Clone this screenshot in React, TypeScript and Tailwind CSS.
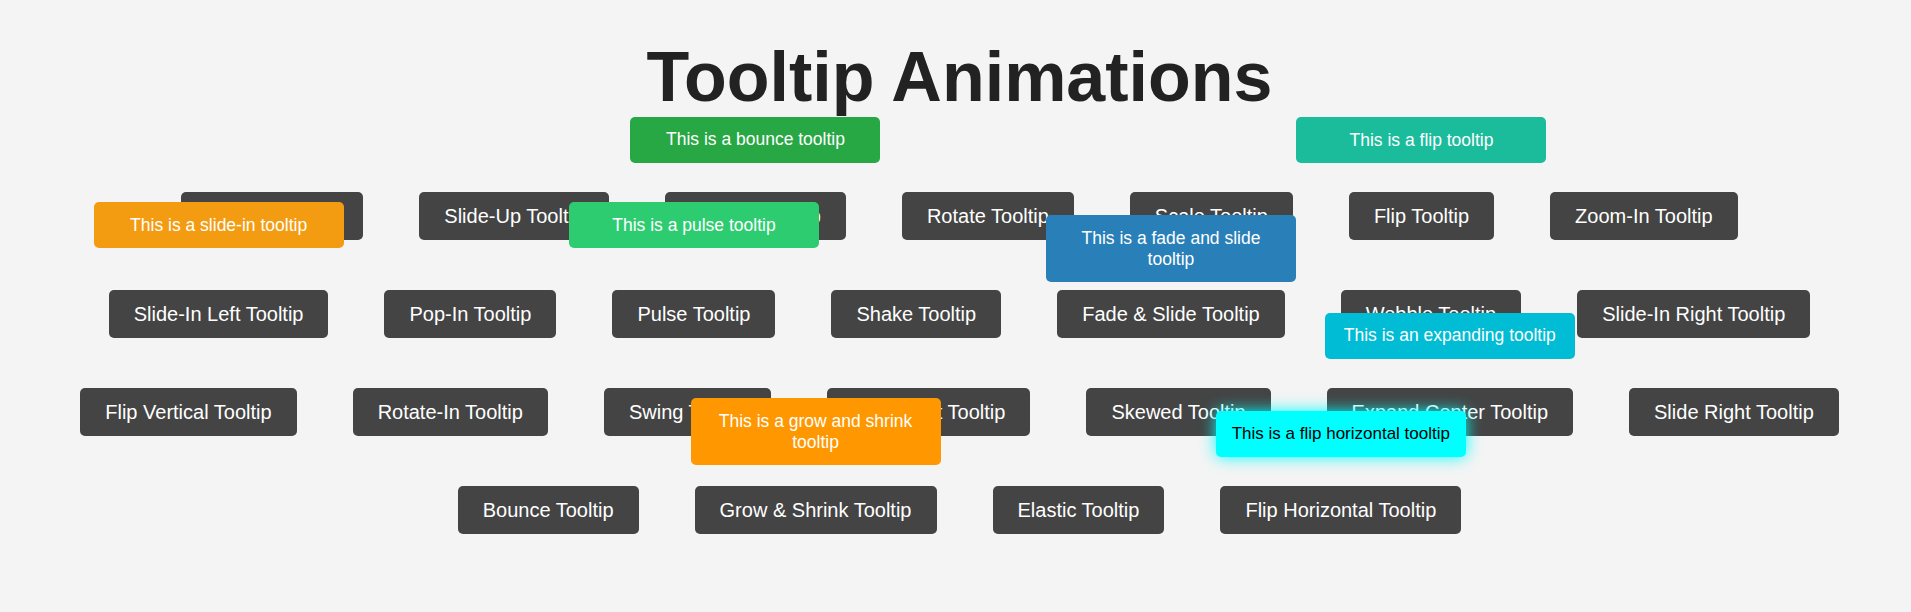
type Tip = {
  text: string[];
  bg: string;
  offset: string;
  dark?: boolean;
};

type Btn = { label: string; tip?: Tip };

const rows: Btn[][] = [
  [
    { label: "Fade-In Tooltip" },
    { label: "Slide-Up Tooltip" },
    {
      label: "Bounce Tooltip",
      tip: { text: ["This is a bounce tooltip"], bg: "bg-[#28a745]", offset: "bottom-[calc(100%+29.5px)]" },
    },
    { label: "Rotate Tooltip" },
    { label: "Scale Tooltip" },
    {
      label: "Flip Tooltip",
      tip: { text: ["This is a flip tooltip"], bg: "bg-[#1abc9c]", offset: "bottom-[calc(100%+29px)]" },
    },
    { label: "Zoom-In Tooltip" },
  ],
  [
    {
      label: "Slide-In Left Tooltip",
      tip: { text: ["This is a slide-in tooltip"], bg: "bg-[#f39c12]", offset: "bottom-[calc(100%+42px)]" },
    },
    { label: "Pop-In Tooltip" },
    {
      label: "Pulse Tooltip",
      tip: { text: ["This is a pulse tooltip"], bg: "bg-[#2ecc71]", offset: "bottom-[calc(100%+42px)]" },
    },
    { label: "Shake Tooltip" },
    {
      label: "Fade & Slide Tooltip",
      tip: { text: ["This is a fade and slide", "tooltip"], bg: "bg-[#2980b9]", offset: "bottom-[calc(100%+8px)]" },
    },
    { label: "Wobble Tooltip" },
    { label: "Slide-In Right Tooltip" },
  ],
  [
    { label: "Flip Vertical Tooltip" },
    { label: "Rotate-In Tooltip" },
    { label: "Swing Tooltip" },
    { label: "Zoom-Out Tooltip" },
    { label: "Skewed Tooltip" },
    {
      label: "Expand Center Tooltip",
      tip: { text: ["This is an expanding tooltip"], bg: "bg-[#00bcd4]", offset: "bottom-[calc(100%+29.5px)]" },
    },
    { label: "Slide Right Tooltip" },
  ],
  [
    { label: "Bounce Tooltip" },
    {
      label: "Grow & Shrink Tooltip",
      tip: { text: ["This is a grow and shrink", "tooltip"], bg: "bg-[#ff9800]", offset: "bottom-[calc(100%+21px)]" },
    },
    { label: "Elastic Tooltip" },
    {
      label: "Flip Horizontal Tooltip",
      tip: {
        text: ["This is a flip horizontal tooltip"],
        bg: "bg-[#00ffff] shadow-[0_0_16px_#00ffff]",
        offset: "bottom-[calc(100%+29.3px)]",
        dark: true,
      },
    },
  ],
];

function Tooltip({ tip }: { tip: Tip }) {
  const two = tip.text.length > 1;
  return (
    <div
      className={`absolute left-1/2 -translate-x-1/2 z-10 w-[250px] rounded-[5px] flex flex-col items-center justify-center whitespace-nowrap leading-[21px] ${
        two ? "h-[67px]" : "h-[46px]"
      } ${tip.dark ? "text-black text-[17px]" : "text-white text-[17.5px]"} ${tip.bg} ${tip.offset}`}
    >
      {tip.text.map((t) => (
        <span key={t}>{t}</span>
      ))}
    </div>
  );
}

export default function App() {
  return (
    <div
      className="min-h-screen bg-[#f4f4f4] pl-[8px] pt-[37px]"
      style={{ fontFamily: '"Liberation Sans", Arial, sans-serif' }}
    >
      <h1 className="text-center text-[70px] leading-[80px] font-bold text-[#222]">Tooltip Animations</h1>

      <div className="mt-[75px] flex flex-col gap-[50px]">
        {rows.map((row, i) => (
          <div key={i} className="flex justify-center gap-[56px]">
            {row.map((b) => (
              <div key={b.label} className="relative">
                <button className="h-[48px] px-[25px] rounded-[5px] bg-[#444] text-white text-[20px] whitespace-nowrap">
                  {b.label}
                </button>
                {b.tip && <Tooltip tip={b.tip} />}
              </div>
            ))}
          </div>
        ))}
      </div>
    </div>
  );
}
